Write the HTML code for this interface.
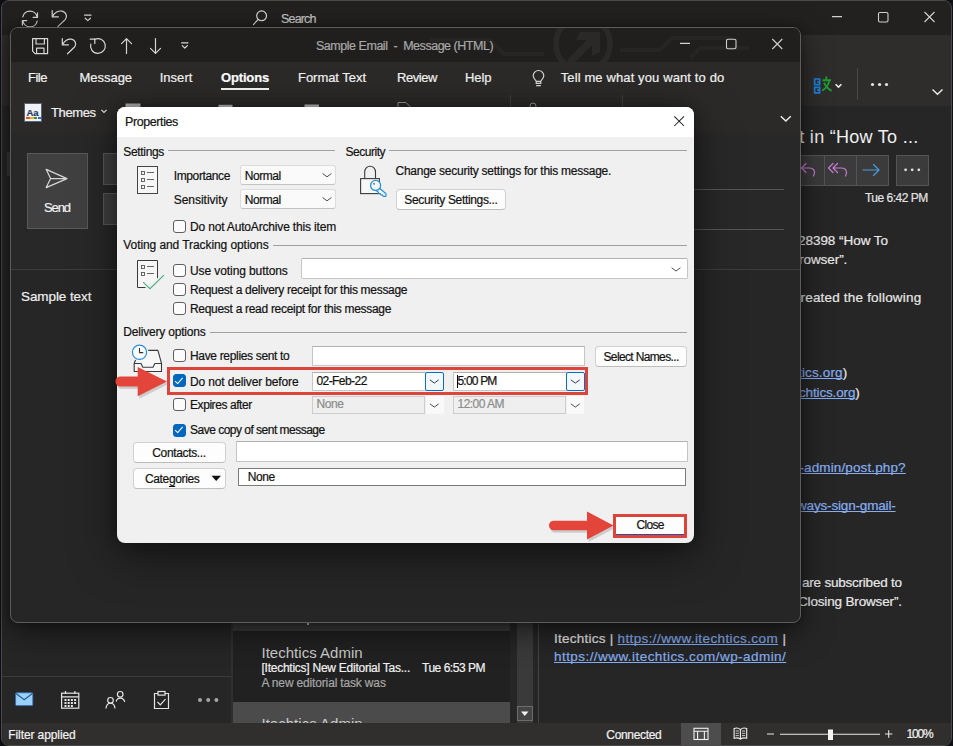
<!DOCTYPE html>
<html lang="en">
<head>
<meta charset="utf-8">
<title>Properties</title>
<style>
*{box-sizing:border-box;margin:0;padding:0}
html,body{width:953px;height:746px;overflow:hidden;background:#0d0f14}
body{font-family:"Liberation Sans",sans-serif;font-size:12px;color:#fff;position:relative}
.a{position:absolute}
.t{position:absolute;white-space:pre;line-height:1;text-decoration-skip-ink:none}
u{text-decoration-skip-ink:none;text-underline-offset:2.500px;text-decoration-thickness:1px}
.t{-webkit-text-stroke:0.2px}
svg{position:absolute;overflow:visible}
.s{fill:none;stroke:#d6d6d6;stroke-width:1.2;stroke-linecap:round;stroke-linejoin:round}
/* main outlook window */
#main{left:1px;top:0;width:951px;height:746px;background:#262626;border-radius:8px;overflow:hidden;border:1px solid #4a4a4a}
#mi{left:-2px;top:-1px;width:953px;height:746px}
#mtitle{left:0;top:0;width:953px;height:35px;background:#222120}
#mribbon{left:0;top:35px;width:953px;height:71px;background:#2f2d2c}
#mstatus{left:0;top:723px;width:953px;height:23px;background:#312f2e}
/* message window */
#msg{left:10px;top:27px;width:791px;height:596px;background:#262626;border-radius:8px;overflow:hidden;border:1px solid #5c5c5c;box-shadow:0 10px 30px rgba(0,0,0,0.5),0 0 8px rgba(0,0,0,0.35)}
#gi{left:-11px;top:-28px;width:953px;height:746px}
#gtitle{left:0;top:27px;width:810px;height:35px;background:#201f1e}
#gribbon{left:0;top:62px;width:810px;height:71px;background:#2c2a29}
#ghead{left:0;top:133px;width:810px;height:136px;background:#282828}
/* dialog */
#dlg{left:117px;top:107px;width:577px;height:436px;background:#f0f0f0;border-radius:8px;overflow:hidden;color:#111;box-shadow:0 12px 44px rgba(0,0,0,0.5),0 0 14px rgba(0,0,0,0.3)}
#di{left:-117px;top:-107px;width:953px;height:746px}
#dtitle{left:117px;top:107px;width:577px;height:30px;background:#fff}
.ln{position:absolute;height:1px;background:#a0a0a0}
.cb{position:absolute;width:13px;height:13px;border:1px solid #5f5f5f;border-radius:3px;background:#fbfbfb}
.cb.on{background:#0067c0;border-color:#0067c0}
.cb.on:after{content:"";position:absolute;left:3.4px;top:0.6px;width:3.2px;height:6.6px;border:solid #fff;border-width:0 1.3px 1.3px 0;transform:rotate(42deg)}
.btn{position:absolute;background:#fdfdfd;border:1px solid #d0d0d0;border-bottom-color:#bdbdbd;border-radius:4px}
.fld{position:absolute;background:#fff;border:1px solid #c6c6c6;border-top-color:#b0b0b0}
.cmb{position:absolute;background:#fafafa;border:1px solid #dcdcdc;border-bottom-color:#c2c2c2;border-radius:3px}
.red{position:absolute;border:3px solid #dc443c}
</style>
</head>
<body>
<div id="main" class="a"><div id="mi" class="a">
<div id="mtitle" class="a"></div>
<div id="mribbon" class="a"></div>
<svg style="left:0;top:0" width="1" height="1"><g class="s" stroke="#b4b4b4">
<path d="M22.800 17 a7.300 7.300 0 0 1 14.300 -0.200 M37.200 21 a7.300 7.300 0 0 1 -14.300 0.200"/><path d="M37.500 12.800 v4.600 h-4.400 M22.400 25.200 v-4.600 h4.400"/>
<path d="M52.2 10.6 v6.2 h6.2"/><path d="M52.600 16.600 c1.600-4 6-6.300 9.600-5.400 c4.400 1.200 5.400 5.600 3 8.400 l-7.400 7"/>
<path d="M84.600 15.2 h6.400 M85.2 18.200 l2.600 2.400 l2.600-2.400"/>
</g></svg>
<svg style="left:0;top:0" width="1" height="1"><g class="s" stroke="#c8c8c8"><circle cx="261.6" cy="15.8" r="4.9"/><path d="M258 19.600 L253.400 24.600"/></g></svg><span class="t" style="left:281.0px;top:13.2px;font-size:12.5px;letter-spacing:-0.83px;color:#c4c4c4">Search</span><svg style="left:0;top:0" width="1" height="1"><g fill="none" stroke="#d0d0d0" stroke-width="1.1">
<path d="M832 16.600 h10"/><rect x="878.5" y="12.500" width="9.500" height="9.500" rx="1.500"/><path d="M924.500 12 l10 10 M934.500 12 l-10 10"/></g></svg>
<svg style="left:0;top:0" width="1" height="1">
<g fill="none" stroke-width="1.700"><path d="M814.600 79 h5 v5.600 h-5 z M814.600 87.400 h5 v5.400 h-5 z M817 82 h2.500 M817 90.200 h2.500" stroke="#1f80d8"/>
<path d="M826.300 76.400 v3.200 M822.400 80.200 h8.600 M829.300 80.600 c-1 4.600-3.800 8.200-7 10 M824 82.600 c1.600 3.600 4.200 6.400 7.600 8.200" stroke="#1f9e30" stroke-width="1.900"/></g>
<path d="M835.600 84.300 l2.900 2.800 l2.900-2.800" fill="none" stroke="#f0f0f0" stroke-width="1.500"/>
<path d="M857.500 68 v31.500" stroke="#4a4a4a" stroke-width="1"/>
<g fill="#e6e6e6"><circle cx="872.500" cy="84.500" r="1.600"/><circle cx="879.600" cy="84.500" r="1.600"/><circle cx="886.500" cy="84.500" r="1.600"/></g>
<path d="M932.500 89.500 l5 4.800 l5-4.800" fill="none" stroke="#e8e8e8" stroke-width="1.500"/>
</svg>
<span class="t" style="left:799.3px;top:128.1px;font-size:18px;letter-spacing:0.28px;color:#f0f0f0;-webkit-text-stroke:0">t in “How To ...</span><div class="a" style="left:790px;top:155px;width:98.500px;height:30.500px;background:#3b3b3b;border:1px solid #545454"></div>
<div class="a" style="left:824px;top:155px;width:1px;height:30.500px;background:#545454"></div>
<div class="a" style="left:856px;top:155px;width:1px;height:30.500px;background:#545454"></div>
<div class="a" style="left:896px;top:155px;width:32.500px;height:30.500px;background:#3b3b3b;border:1px solid #545454"></div>
<svg style="left:0;top:0" width="1" height="1"><g fill="none" stroke-width="1.200" stroke-linecap="round" stroke-linejoin="round">
<path d="M806 163.500 l-4.500 4.500 l4.500 4.500 M802 168 h7.500 c4.500 0 6.500 4 4 8" stroke="#c77dd6"/>
<path d="M837.500 163.500 l-4.500 4.500 l4.500 4.500 M833.500 168 h8 c4.500 0 6.500 4 4 8 M833 163.500 l-4.500 4.500 l4.500 4.500" stroke="#c77dd6"/>
<path d="M863 170 h16 M873.500 164.500 l5.500 5.500 l-5.500 5.500" stroke="#4a9be0"/></g>
<g fill="#e0e0e0"><circle cx="905.600" cy="169.800" r="1.400"/><circle cx="912.200" cy="169.800" r="1.400"/><circle cx="918.800" cy="169.800" r="1.400"/></g></svg>
<span class="t" style="left:864.9px;top:191.8px;font-size:12px;letter-spacing:-0.48px;color:#e4e4e4">Tue 6:42 PM</span><span class="t" style="left:798.0px;top:234.4px;font-size:13.5px;letter-spacing:-0.04px;color:#e8e8e8">28398 “How To</span><span class="t" style="left:799.0px;top:253.2px;font-size:13.5px;letter-spacing:-0.06px;color:#e8e8e8">rowser”.</span><span class="t" style="left:800.5px;top:291.1px;font-size:13.5px;letter-spacing:0.19px;color:#e8e8e8">reated the following</span><span class="t" style="left:798.0px;top:366.2px;font-size:13.5px;letter-spacing:0.15px;color:#86aef0;text-decoration:underline">tics.org</span><span class="t" style="left:842.7px;top:366.2px;font-size:13.5px;letter-spacing:-1.20px;color:#e8e8e8">)</span><span class="t" style="left:799.0px;top:385.6px;font-size:13.5px;letter-spacing:-0.15px;color:#86aef0;text-decoration:underline">chtics.org</span><span class="t" style="left:855.3px;top:385.6px;font-size:13.5px;letter-spacing:-0.80px;color:#e8e8e8">)</span><span class="t" style="left:799.5px;top:461.2px;font-size:13.5px;letter-spacing:0.12px;color:#86aef0;text-decoration:underline">-admin/post.php?</span><span class="t" style="left:797.0px;top:499.0px;font-size:13.5px;letter-spacing:-0.17px;color:#86aef0;text-decoration:underline">ways-sign-gmail-</span><span class="t" style="left:802.0px;top:575.5px;font-size:13.5px;letter-spacing:-0.22px;color:#e8e8e8">are subscribed to</span><span class="t" style="left:798.0px;top:594.7px;font-size:13.5px;letter-spacing:-0.16px;color:#e8e8e8">Closing Browser”.</span><span class="t" style="left:554.0px;top:632.2px;font-size:13.5px;letter-spacing:0.25px;color:#e8e8e8">Itechtics | </span><span class="t" style="left:617.5px;top:632.2px;font-size:13.5px;letter-spacing:0.39px;color:#86aef0;text-decoration:underline">https://www.itechtics.com</span><span class="t" style="left:778.0px;top:632.2px;font-size:13.5px;letter-spacing:0.87px;color:#e8e8e8"> |</span><span class="t" style="left:554.0px;top:650.0px;font-size:13.5px;letter-spacing:0.44px;color:#86aef0;text-decoration:underline">https://www.itechtics.com/wp-admin/</span>
<div class="a" style="left:0;top:106px;width:231px;height:617px;background:#262626"></div>
<div class="a" style="left:231px;top:106px;width:2px;height:617px;background:#303030"></div>
<div class="a" style="left:233px;top:106px;width:277px;height:617px;background:#212121"></div>
<div class="a" style="left:233px;top:600px;width:277px;height:31px;background:#3b3b3b"></div>
<div class="a" style="left:233px;top:702px;width:277px;height:21px;background:#4b4b4b"></div>
<div class="a" style="left:510px;top:106px;width:28px;height:617px;background:#262626"></div>
<div class="a" style="left:517px;top:106px;width:15.500px;height:617px;background:#3a3a3a"></div>
<div class="a" style="left:517px;top:706px;width:15.500px;height:15px;background:#444;border:1px solid #6c6c6c"></div>
<svg style="left:0;top:0" width="1" height="1"><path d="M521 711.500 h7.500 l-3.750 4.500 z" fill="#f0f0f0"/></svg>
<div class="a" style="left:538px;top:106px;width:1px;height:617px;background:#444"></div>
<div class="a" style="left:0;top:676px;width:231px;height:1px;background:#3c3c3c"></div>
<div class="a" style="left:7px;top:151.500px;width:3px;height:24px;background:#3c3c3c"></div>
<div class="a" style="left:307px;top:623px;width:2px;height:1.500px;background:#cfcfcf"></div>
<span class="t" style="left:261.5px;top:644.9px;font-size:15px;letter-spacing:0.02px;color:#cacaca;-webkit-text-stroke:0">Itechtics Admin</span><span class="t" style="left:261.5px;top:662.4px;font-size:12px;letter-spacing:-0.25px;color:#f2f2f2">[Itechtics] New Editorial Tas...</span><span class="t" style="left:422.0px;top:662.4px;font-size:12px;letter-spacing:-0.48px;color:#f2f2f2">Tue 6:53 PM</span><span class="t" style="left:261.5px;top:677.1px;font-size:12px;letter-spacing:-0.16px;color:#a6a6a6">A new editorial task was</span><span class="t" style="left:261.5px;top:716.4px;font-size:15px;letter-spacing:0.02px;color:#cacaca;-webkit-text-stroke:0">Itechtics Admin</span>
<svg style="left:0;top:0" width="1" height="1">
<rect x="15.600" y="692.800" width="17.200" height="12.800" rx="1" fill="#9ad0fa" stroke="#2f6fb0" stroke-width="0.800"/><path d="M16 693.600 l8.200 6.200 l8.200-6.200" fill="none" stroke="#2a5f94" stroke-width="1.300"/>
<g fill="none" stroke="#e4e4e4" stroke-width="1.200"><rect x="61.600" y="693.200" width="17.200" height="15"/><path d="M61.600 696.800 h17.200 M65.500 691 v3 M74.900 691 v3"/></g>
<g fill="#e4e4e4"><rect x="64.500" y="699" width="2" height="2"/><rect x="67.700" y="699" width="2" height="2"/><rect x="70.900" y="699" width="2" height="2"/><rect x="74.100" y="699" width="2" height="2"/><rect x="64.500" y="702" width="2" height="2"/><rect x="67.700" y="702" width="2" height="2"/><rect x="70.900" y="702" width="2" height="2"/><rect x="74.100" y="702" width="2" height="2"/><rect x="64.500" y="705" width="2" height="2"/><rect x="67.700" y="705" width="2" height="2"/><rect x="70.900" y="705" width="2" height="2"/></g>
<g fill="none" stroke="#e4e4e4" stroke-width="1.200"><circle cx="110.500" cy="700.300" r="2.800"/><path d="M106 708.500 c0.500-7 8.500-7 9 0"/><circle cx="120.200" cy="694.300" r="2.800"/><path d="M116.200 701.500 c1-4.500 7.500-4.500 8.500 0.500"/></g>
<g fill="none" stroke="#e4e4e4" stroke-width="1.200"><path d="M158 693.500 h-3.500 v15 h14 v-15 h-3.500"/><rect x="158" y="691.500" width="7" height="3.600"/><path d="M157.500 702 l2.800 2.800 l5.200-5.600"/></g>
<g fill="#a6a6a6"><circle cx="200" cy="700" r="2"/><circle cx="208.200" cy="700" r="2"/><circle cx="216.400" cy="700" r="2"/></g>
</svg>
<div id="mstatus" class="a"></div>
<span class="t" style="left:8.3px;top:729.2px;font-size:12px;letter-spacing:-0.10px;color:#f2f2f2">Filter applied</span><span class="t" style="left:606.3px;top:729.2px;font-size:12px;letter-spacing:-0.33px;color:#f2f2f2">Connected</span><div class="a" style="left:681px;top:723px;width:40px;height:23px;background:#4d4d4d"></div>
<svg style="left:0;top:0" width="1" height="1"><g fill="none" stroke="#f0f0f0" stroke-width="1.100">
<rect x="694" y="728.300" width="14" height="11.200"/><path d="M694 731.300 h14 M697.600 731.300 v8.200 M704.400 731.300 v8.200"/>
<path d="M740.400 729.600 v9.600 M740.400 729.600 c-1.500-1.600-4.500-1.800-6.300-1.200 v9.800 c2-0.500 4.800-0.300 6.300 1 c1.500-1.300 4.300-1.500 6.300-1 v-9.800 c-1.800-0.600-4.800-0.400-6.300 1.200"/>
<path d="M735.600 731 h3.300 M735.600 733.300 h3.300 M735.600 735.600 h3.300 M741.900 731 h3.300 M741.900 733.300 h3.300 M741.900 735.600 h3.300" stroke-width="0.800"/>
<path d="M767 734 h7 M780 734.300 h100 M885 734 h7.400 M888.700 730.300 v7.400" stroke="#e8e8e8"/></g>
<rect x="828" y="729.500" width="5" height="10.500" fill="#f4f4f4"/></svg>
<span class="t" style="left:906.5px;top:728.2px;font-size:12px;letter-spacing:-1.15px;color:#f2f2f2">100%</span>
</div></div>
<div id="msg" class="a"><div id="gi" class="a">
<div id="gtitle" class="a"></div>
<div id="gribbon" class="a"></div>
<div id="ghead" class="a"></div>
<div class="a" style="left:0;top:28px;width:810px;height:34px;overflow:hidden"><svg style="left:0;top:-28px" width="1" height="1"><g fill="none" stroke="#2a2928" stroke-width="5.500"><circle cx="583" cy="44" r="27"/></g><path d="M567 60 l20-20 h-11 l4-8 h20 v20 l-8 4 v-11 l-20 20 z" fill="#2a2928"/><path d="M430 40 h60 l14 14 h40 M620 50 h40 l12-12 h60 M690 58 l10-10 h50" fill="none" stroke="#262524" stroke-width="4"/></svg></div>
<svg style="left:0;top:0" width="1" height="1"><g class="s" stroke="#b4b4b4" stroke-width="1.150">
<path d="M32.600 38.600 h15 v15 h-12.500 l-2.500-2.500 z M36 38.600 v5.400 h8.400 v-5.400 M36.600 53.600 v-5.400 h7.400 v5.400"/>
<path d="M62.300 38.600 v6.200 h6.200"/><path d="M62.700 44.400 c1.500-3.600 5.400-6 8.800-5.200 c4.200 1 5.200 5.200 3 7.800 l-7 6.800"/>
<path d="M90.200 39.200 h4.600 v4.400"/><path d="M94.600 39.400 a7.400 7.400 0 1 1 -3.800 4.600"/>
<path d="M126.500 53.500 v-15 M121.500 43.600 l5-5 l5 5"/>
<path d="M155.500 38.500 v15 M150.500 48.400 l5 5 l5-5"/>
<path d="M181.600 42.800 h6.400 M182.200 45.600 l2.600 2.400 l2.600-2.400"/>
</g></svg>
<span class="t" style="left:316.0px;top:40.0px;font-size:12.5px;letter-spacing:-0.47px;color:#a8a8a8">Sample Email  -  Message (HTML)</span><svg style="left:0;top:0" width="1" height="1"><g fill="none" stroke="#d0d0d0" stroke-width="1.100">
<path d="M680 43.400 h10"/><rect x="726.500" y="39.300" width="9.500" height="9.500" rx="1.500"/><path d="M772.300 39 l10 10 M782.300 39 l-10 10"/></g></svg>
<span class="t" style="left:28.0px;top:70.6px;font-size:13px;letter-spacing:-0.49px;color:#f2f2f2">File</span><span class="t" style="left:79.6px;top:70.6px;font-size:13px;letter-spacing:-0.05px;color:#f2f2f2">Message</span><span class="t" style="left:159.7px;top:70.6px;font-size:13px;letter-spacing:0.03px;color:#f2f2f2">Insert</span><span class="t" style="left:221.0px;top:70.6px;font-size:13px;letter-spacing:-0.16px;color:#fff;font-weight:bold">Options</span><div class="a" style="left:221px;top:87.500px;width:48px;height:2.500px;background:#f4f4f4"></div><span class="t" style="left:298.0px;top:70.6px;font-size:13px;letter-spacing:-0.04px;color:#f2f2f2">Format Text</span><span class="t" style="left:397.0px;top:70.6px;font-size:13px;letter-spacing:-0.44px;color:#f2f2f2">Review</span><span class="t" style="left:465.0px;top:70.6px;font-size:13px;letter-spacing:-0.09px;color:#f2f2f2">Help</span><svg style="left:0;top:0" width="1" height="1"><g class="s" stroke="#f0f0f0" stroke-width="1.200"><path d="M536.200 81.200 c-1.800-1.900-3-3.300-3-5.400 a5.300 5.300 0 0 1 10.600 0 c0 2.100-1.200 3.500-3 5.400 v2.200 h-4.600 z M536.200 81.300 h4.600 M536.600 85.700 h3.800"/></g></svg><span class="t" style="left:560.7px;top:71.0px;font-size:13px;letter-spacing:0.12px;color:#f2f2f2">Tell me what you want to do</span>
<div class="a" style="left:23.500px;top:103px;width:18.500px;height:18.500px;background:#f0f2f6;border:1.500px solid #56627a"></div><span class="t" style="left:26.5px;top:108.1px;font-size:9.5px;letter-spacing:-0.08px;color:#223a6a;font-weight:bold">Aa</span><div class="a" style="left:26px;top:116.500px;width:3.500px;height:2px;background:#d9532c"></div><div class="a" style="left:30px;top:116.500px;width:3.500px;height:2px;background:#e8b422"></div><div class="a" style="left:34px;top:116.500px;width:3px;height:2px;background:#3b8f4c"></div><div class="a" style="left:37.500px;top:116.500px;width:3px;height:2px;background:#2e6fc4"></div><span class="t" style="left:51.0px;top:105.6px;font-size:13px;letter-spacing:-0.38px;color:#f2f2f2">Themes</span><svg style="left:0;top:0" width="1" height="1"><path d="M101.400 109.900 l2.600 2.600 l2.600-2.600" fill="none" stroke="#e0e0e0" stroke-width="1.200"/>
<path d="M780.800 116.200 l5 4.800 l5-4.800" fill="none" stroke="#e8e8e8" stroke-width="1.500"/>
<path d="M510.500 95 v12 M622.500 95 v12" stroke="#3f3f3f" stroke-width="1"/>
<g fill="none" stroke="#9a9a9a" stroke-width="1"><path d="M398 107 v-4.500 h8 l4 4 v0.500"/><rect x="218.500" y="104.800" width="14" height="4" fill="#bdbdbd" stroke="none"/><rect x="304.500" y="104.500" width="14.500" height="4" fill="#bdbdbd" stroke="none"/><rect x="125.500" y="103.500" width="15" height="5" fill="#b0b0b0" stroke="none"/><circle cx="533" cy="106" r="3"/></g></svg>
<div class="a" style="left:27px;top:153px;width:60.500px;height:76px;background:#404040;border:1px solid #5a5a5a"></div>
<svg style="left:0;top:0" width="1" height="1"><g class="s" stroke="#d8d8d8" stroke-width="1.200"><path d="M46.200 169.400 L67 178.600 L46.200 187.600 L50.600 178.600 Z M50.600 178.600 H67"/></g></svg><span class="t" style="left:43.9px;top:200.6px;font-size:13px;letter-spacing:-1.07px;color:#f2f2f2">Send</span><div class="a" style="left:103px;top:153px;width:60px;height:32px;background:#404040;border:1px solid #5a5a5a"></div>
<div class="a" style="left:103px;top:193px;width:60px;height:32px;background:#404040;border:1px solid #5a5a5a"></div>
<div class="a" style="left:170px;top:189px;width:614px;height:1px;background:#555"></div>
<div class="a" style="left:170px;top:229px;width:614px;height:1px;background:#555"></div>
<div class="a" style="left:0;top:269px;width:810px;height:1px;background:#3c3c3c"></div>
<span class="t" style="left:21.0px;top:289.6px;font-size:13.5px;letter-spacing:-0.09px;color:#f0f0f0">Sample text</span>
</div></div>
<div id="dlg" class="a"><div id="di" class="a">
<div id="dtitle" class="a"></div>
<span class="t" style="left:125.0px;top:116.2px;font-size:12.5px;letter-spacing:-0.40px">Properties</span><svg style="left:0;top:0" width="1" height="1"><path d="M674.300 116.300 L684 126 M684 116.300 L674.300 126" stroke="#222" stroke-width="1.050" fill="none"/></svg>
<span class="t" style="left:123.3px;top:145.8px;font-size:12px;letter-spacing:-0.33px">Settings</span><div class="ln" style="left:168px;top:150px;width:167px"></div><span class="t" style="left:345.6px;top:145.8px;font-size:12px;letter-spacing:-0.49px">Security</span><div class="ln" style="left:389px;top:150px;width:298px"></div>
<svg style="left:137px;top:166px" width="21" height="28" viewBox="0 0 21 28"><rect x="0.5" y="0.5" width="20" height="27" fill="#f6f6f6" stroke="#444" stroke-width="1"/><g fill="none" stroke="#555" stroke-width="0.9"><rect x="4.5" y="5.5" width="3" height="3"/><rect x="4.5" y="12.5" width="3" height="3"/><rect x="4.5" y="19.5" width="3" height="3"/><path d="M10 6.500h7M10 13.500h7M10 20.500h7"/></g></svg>
<span class="t" style="left:173.7px;top:169.7px;font-size:12px;letter-spacing:-0.37px">Importance</span><div class="cmb" style="left:240px;top:165px;width:95.5px;height:20px"></div><span class="t" style="left:244.7px;top:169.7px;font-size:12px;letter-spacing:-0.45px">Normal</span><svg class="a" style="left:0;top:0" width="1" height="1"><path d="M322.9 173.8 L327.0 176.8 L331.1 173.8" fill="none" stroke="#444" stroke-width="0.95" stroke-linecap="round" stroke-linejoin="round"/></svg><span class="t" style="left:173.7px;top:194.2px;font-size:12px;letter-spacing:-0.02px">Sensitivity</span><div class="cmb" style="left:240px;top:189px;width:95.5px;height:20px"></div><span class="t" style="left:244.7px;top:193.7px;font-size:12px;letter-spacing:-0.45px">Normal</span><svg class="a" style="left:0;top:0" width="1" height="1"><path d="M322.9 197.8 L327.0 200.8 L331.1 197.8" fill="none" stroke="#444" stroke-width="0.95" stroke-linecap="round" stroke-linejoin="round"/></svg><div class="cb" style="left:173px;top:220px"></div><span class="t" style="left:190.0px;top:221.4px;font-size:12px;letter-spacing:-0.17px">Do not AutoArchive this item</span>
<svg style="left:358px;top:164px" width="32" height="34" viewBox="0 0 32 34"><path d="M6.700 14.500 V8 a5.400 5.700 0 0 1 10.800 0 V14.500" fill="none" stroke="#3a3a3a" stroke-width="1.100"/><rect x="2.600" y="14.600" width="18.800" height="15" fill="#f8f8f8" stroke="#3a3a3a" stroke-width="1.100"/><path d="M21 23.800 L28 29.800 V32.300 H25.200 L24.300 30.900 L23 31 L22.300 29.500 L21 29.600 L20.200 28.100 L18 26.500 Z" fill="#f4f9fd" stroke="#2b8fd6" stroke-width="1.200" stroke-linejoin="round"/><circle cx="17.600" cy="21.400" r="5" fill="#f4f8fb" stroke="#2b8fd6" stroke-width="1.300"/><circle cx="16" cy="19.800" r="0.900" fill="#35618a"/></svg>
<span class="t" style="left:395.5px;top:165.4px;font-size:12px;letter-spacing:-0.25px">Change security settings for this message.</span><div class="btn" style="left:396px;top:189px;width:110px;height:21px"></div><span class="t" style="left:404.3px;top:194.4px;font-size:12px;letter-spacing:-0.34px">Security Settings...</span>
<span class="t" style="left:123.3px;top:238.7px;font-size:12px;letter-spacing:-0.08px">Voting and Tracking options</span><div class="ln" style="left:273px;top:244.5px;width:414px"></div><svg style="left:136px;top:259px" width="30" height="32" viewBox="0 0 30 32"><path d="M9.500 28.500 H1.500 V1.500 H21.500 V19.200" fill="#f6f6f6" stroke="#3a3a3a" stroke-width="1" stroke-linejoin="miter"/><g fill="none" stroke="#555" stroke-width="0.9"><rect x="5.5" y="6.5" width="3" height="3"/><rect x="5.5" y="13.5" width="3" height="3"/><path d="M11 7.500h7M11 14.500h7"/></g><path d="M7.100 23.200 L14 29.600 L27.900 16.200" fill="none" stroke="#4aae80" stroke-width="1.150"/></svg>
<div class="cb" style="left:173px;top:264px"></div><span class="t" style="left:190.0px;top:265.2px;font-size:12px;letter-spacing:-0.09px">Use voting buttons</span><div class="fld" style="left:301px;top:258px;width:387px;height:20.500px;border-radius:2px"></div><svg class="a" style="left:0;top:0" width="1" height="1"><path d="M671.9 268.0 L676.0 271.0 L680.1 268.0" fill="none" stroke="#444" stroke-width="0.95" stroke-linecap="round" stroke-linejoin="round"/></svg><div class="cb" style="left:173px;top:283px"></div><span class="t" style="left:190.0px;top:284.4px;font-size:12px;letter-spacing:-0.30px">Request a delivery receipt for this message</span><div class="cb" style="left:173px;top:302px"></div><span class="t" style="left:190.0px;top:303.0px;font-size:12px;letter-spacing:-0.30px">Request a read receipt for this message</span>
<span class="t" style="left:123.3px;top:325.7px;font-size:12px;letter-spacing:-0.19px">Delivery options</span><div class="ln" style="left:210px;top:331.5px;width:477px"></div><svg style="left:0;top:0" width="1" height="1"><path d="M148.200 350.400 H157.900 L161.500 363.300 V371.500 H134.200 V363.300 L135.600 360" fill="#f7f7f7" stroke="#3a3a3a" stroke-width="1.100" stroke-linejoin="round"/><path d="M134.200 363.500 H141 L142.800 367.200 H153 L154.900 363.500 H161.500" fill="none" stroke="#3a3a3a" stroke-width="1.100"/><circle cx="139.500" cy="352.300" r="7.100" fill="#fbfdff" stroke="#2b8fd6" stroke-width="1.200"/><path d="M139.500 348 V352.600 H143.200" fill="none" stroke="#333" stroke-width="1.100"/></svg>
<div class="cb" style="left:173px;top:349px"></div><span class="t" style="left:190.0px;top:350.1px;font-size:12px;letter-spacing:-0.33px">Have replies sent to</span><div class="fld" style="left:312px;top:345.5px;width:273px;height:20.5px"></div><div class="btn" style="left:595px;top:346px;width:92px;height:21px"></div><span class="t" style="left:603.5px;top:351.1px;font-size:12px;letter-spacing:-0.64px">Select Names...</span>
<div class="fld" style="left:312px;top:371.5px;width:113.5px;height:19.5px"></div><div class="a" style="left:425px;top:372px;width:18.5px;height:18.5px;background:#f3f8fd;border:1px solid #0a6cc4;border-radius:2px"></div><svg class="a" style="left:0;top:0" width="1" height="1"><path d="M430.2 380.1 L434.3 383.1 L438.4 380.1" fill="none" stroke="#234" stroke-width="0.95" stroke-linecap="round" stroke-linejoin="round"/></svg><div class="fld" style="left:453px;top:371.5px;width:113.5px;height:19.5px"></div><div class="a" style="left:566px;top:372px;width:18.5px;height:18.5px;background:#f3f8fd;border:1px solid #0a6cc4;border-radius:2px"></div><svg class="a" style="left:0;top:0" width="1" height="1"><path d="M571.2 380.1 L575.3 383.1 L579.4 380.1" fill="none" stroke="#234" stroke-width="0.95" stroke-linecap="round" stroke-linejoin="round"/></svg><div class="a" style="left:457px;top:374.5px;width:1px;height:13px;background:#000"></div><div class="cb on" style="left:173px;top:374px"></div><span class="t" style="left:190.0px;top:375.7px;font-size:12px;letter-spacing:-0.14px">Do not deliver before</span><span class="t" style="left:316.4px;top:375.4px;font-size:12px;letter-spacing:-0.55px">02-Feb-22</span><span class="t" style="left:457.5px;top:375.4px;font-size:12px;letter-spacing:-0.81px">5:00 PM</span><div class="red" style="left:167px;top:367px;width:421px;height:27.5px"></div>
<div class="cb" style="left:173px;top:398px"></div><span class="t" style="left:190.0px;top:398.9px;font-size:12px;letter-spacing:-0.43px">Expires after</span><div class="fld" style="left:312px;top:395.5px;width:113px;height:18.5px;background:#efefef;border-color:#cdcdcd"></div><div class="a" style="left:426px;top:396px;width:17.5px;height:17.5px;background:#f9f9f9;border-radius:2px"></div><svg class="a" style="left:0;top:0" width="1" height="1"><path d="M430.2 404.1 L434.3 407.1 L438.4 404.1" fill="none" stroke="#444" stroke-width="0.95" stroke-linecap="round" stroke-linejoin="round"/></svg><div class="fld" style="left:453px;top:395.5px;width:113px;height:18.5px;background:#efefef;border-color:#cdcdcd"></div><div class="a" style="left:567px;top:396px;width:17px;height:17.5px;background:#f9f9f9;border-radius:2px"></div><svg class="a" style="left:0;top:0" width="1" height="1"><path d="M571.2 404.1 L575.3 407.1 L579.4 404.1" fill="none" stroke="#444" stroke-width="0.95" stroke-linecap="round" stroke-linejoin="round"/></svg><span class="t" style="left:316.4px;top:398.0px;font-size:12px;letter-spacing:-0.37px;color:#8c8c8c">None</span><span class="t" style="left:457.5px;top:398.0px;font-size:12px;letter-spacing:-0.53px;color:#8c8c8c">12:00 AM</span>
<div class="cb on" style="left:173px;top:423.5px"></div><span class="t" style="left:190.0px;top:424.1px;font-size:12px;letter-spacing:-0.51px">Save copy of sent message</span><div class="btn" style="left:133px;top:442px;width:92.5px;height:21px"></div><span class="t" style="left:152.3px;top:447.4px;font-size:12px;letter-spacing:-0.36px">Contacts...</span><div class="fld" style="left:236px;top:441px;width:452px;height:20.500px"></div><div class="btn" style="left:133px;top:468px;width:92.5px;height:21px"></div><span class="t" style="left:145.0px;top:472.7px;font-size:12px;letter-spacing:-0.36px">Cate<u>g</u>ories</span><svg style="left:0;top:0" width="1" height="1"><path d="M211.5 475.8 H221 L216.2 481 Z" fill="#111"/></svg><div class="fld" style="left:238px;top:468.3px;width:448px;height:18px;border-color:#7a7a7a"></div><span class="t" style="left:247.8px;top:471.4px;font-size:12px;letter-spacing:-0.47px">None</span>
<div class="a" style="left:615px;top:516px;width:70px;height:20px;background:#fdfdfd;border-bottom:2px solid #2a4f9a"></div><span class="t" style="left:636.5px;top:519.2px;font-size:12px;letter-spacing:-0.68px">Close</span><div class="red" style="left:613px;top:514px;width:74px;height:24px"></div><svg style="left:0;top:0" width="1" height="1"><path d="M553.8 520.7 H587 V511.5 L613.5 525.5 L587 539.5 V530.3 H553.8 A4.8 4.8 0 0 1 553.8 520.7 Z" fill="#8a8a8a" opacity="0.35" transform="translate(1.5,2.5)"/><path d="M553.8 520.7 H587 V511.5 L613.5 525.5 L587 539.5 V530.3 H553.8 A4.8 4.8 0 0 1 553.8 520.7 Z" fill="#e3453b"/></svg>
</div></div>
<svg style="left:0;top:0" width="1" height="1"><path d="M120.5 376.6 H137.7 V366.90000000000003 L167 381.6 L137.7 396.3 V386.6 H120.5 A5 5 0 0 1 120.5 376.6 Z" fill="#8a8a8a" opacity="0.35" transform="translate(1.5,2.5)"/><path d="M120.5 376.6 H137.7 V366.90000000000003 L167 381.6 L137.7 396.3 V386.6 H120.5 A5 5 0 0 1 120.5 376.6 Z" fill="#e3453b"/></svg>
</body>
</html>
